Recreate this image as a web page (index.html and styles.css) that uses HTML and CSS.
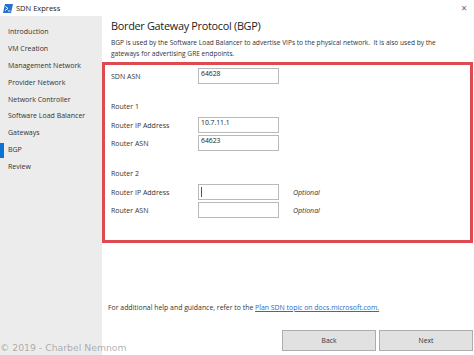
FILE: index.html
```html
<!DOCTYPE html>
<html>
<head>
<meta charset="utf-8">
<link rel="stylesheet" href="styles.css">
</head>
<body>
<div class="window">
  <div class="titlebar">
    <svg class="appicon" width="10" height="9" viewBox="0 0 10 9">
      <polygon points="2,0 10,0 8,9 0,9" fill="#2a6fc9"/>
      <polyline points="2.5,2.5 5,4.5 2,6.5" fill="none" stroke="#fff" stroke-width="1"/>
      <line x1="5" y1="7" x2="7.5" y2="7" stroke="#fff" stroke-width="0.9"/>
    </svg>
    <span class="apptitle">SDN Express</span>
    <span class="close">×</span>
  </div>
  <div class="main">
    <nav class="sidebar">
      <div class="navitem">Introduction</div>
      <div class="navitem">VM Creation</div>
      <div class="navitem">Management Network</div>
      <div class="navitem">Provider Network</div>
      <div class="navitem">Network Controller</div>
      <div class="navitem">Software Load Balancer</div>
      <div class="navitem">Gateways</div>
      <div class="navitem active">BGP</div>
      <div class="navitem">Review</div>
    </nav>
    <section class="content">
      <h1 class="title">Border Gateway Protocol (BGP)</h1>
      <p class="desc">BGP is used by the Software Load Balancer to advertise VIPs to the physical network.&nbsp; It is also used by the gateways for advertising GRE endpoints.</p>
      <div class="form">
        <div class="row first">
          <span class="label">SDN ASN</span>
          <div class="input">64628</div>
        </div>
        <div class="group">Router 1</div>
        <div class="row">
          <span class="label">Router IP Address</span>
          <div class="input">10.7.11.1</div>
        </div>
        <div class="row tight">
          <span class="label">Router ASN</span>
          <div class="input">64623</div>
        </div>
        <div class="group">Router 2</div>
        <div class="row">
          <span class="label">Router IP Address</span>
          <div class="input"><span class="caret"></span></div>
          <span class="opt">Optional</span>
        </div>
        <div class="row tight">
          <span class="label">Router ASN</span>
          <div class="input"></div>
          <span class="opt">Optional</span>
        </div>
      </div>
      <p class="help">For additional help and guidance, refer to the <a class="link">Plan SDN topic on docs.microsoft.com.</a></p>
      <div class="buttons">
        <div class="btn back">Back</div>
        <div class="btn next">Next</div>
      </div>
    </section>
  </div>
  <div class="watermark">© 2019 - Charbel Nemnom</div>
</div>
</body>
</html>
```
FILE: styles.css
```css
* { box-sizing: border-box; }
html, body { margin: 0; padding: 0; }
body {
  width: 474px;
  height: 355px;
  overflow: hidden;
  background: #fff;
  font-family: "Open Sans", "Noto Sans", sans-serif;
  color: #333;
}
.window {
  position: relative;
  width: 474px;
  height: 355px;
  display: flex;
  flex-direction: column;
}
.titlebar {
  height: 16px;
  display: flex;
  align-items: center;
  padding-left: 3px;
  font-size: 7.5px;
  color: #222;
}
.appicon { margin-right: 3px; }
.apptitle { flex: 1; }
.close {
  width: 18px;
  font-size: 10px;
  color: #666;
  text-align: center;
  margin-right: 1px;
}
.main {
  flex: 1;
  display: flex;
}
.sidebar {
  width: 102px;
  background: #ececec;
  padding-top: 8px;
}
.navitem {
  position: relative;
  height: 16.9px;
  line-height: 16.9px;
  padding-left: 8px;
  font-size: 7px;
  color: #333;
  white-space: nowrap;
}
.navitem.active::before {
  content: "";
  position: absolute;
  left: 0;
  top: 1px;
  width: 4px;
  height: 15px;
  background: #0a74d6;
}
.content {
  flex: 1;
  display: flex;
  flex-direction: column;
  padding-top: 2px;
}
.title {
  margin: 0 0 3px 9px;
  font-size: 10.9px;
  letter-spacing: -0.3px;
  line-height: 16px;
  font-weight: normal;
  color: #222;
}
.desc {
  margin: 0 0 0 9px;
  font-size: 6.6px;
  line-height: 11px;
  color: #333;
  width: 350px;
}
.form {
  margin-top: 3px;
  width: 371px;
  height: 181px;
  border: 3px solid #dd4b50;
  padding: 3px 0 0 6px;
}
.row {
  display: flex;
  align-items: center;
  height: 16px;
  margin-top: 4px;
}
.row.first { margin-top: 0; }
.row.tight { margin-top: 2px; }
.label {
  width: 87px;
  font-size: 7px;
  color: #333;
}
.input {
  width: 81px;
  height: 16px;
  border: 1px solid #b9b9b9;
  background: #fff;
  font-size: 6.8px;
  line-height: 9px;
  padding-left: 2px;
  color: #222;
  position: relative;
  align-self: flex-start;
}
.caret {
  position: absolute;
  left: 2px;
  top: 2px;
  width: 1px;
  height: 10px;
  background: #555;
}
.opt {
  margin-left: 14px;
  font-size: 7px;
  font-style: italic;
  color: #333;
}
.group {
  font-size: 7px;
  line-height: 12px;
  height: 12px;
  margin-top: 17px;
  color: #333;
}
.help {
  margin: 60px 0 0 6px;
  font-size: 6.9px;
  line-height: 10px;
  color: #333;
}
.link {
  color: #2b6cc4;
  text-decoration: underline;
}
.buttons {
  display: flex;
  justify-content: flex-end;
  gap: 3px;
  margin-top: 17px;
  padding-right: 1px;
}
.btn {
  width: 94px;
  height: 21px;
  background: #e1e1e1;
  border: 1px solid #adadad;
  font-size: 6.8px;
  line-height: 19px;
  text-align: center;
  color: #333;
}
.watermark {
  position: absolute;
  left: 0;
  bottom: 0;
  font-family: "DejaVu Sans", sans-serif;
  font-size: 9.3px;
  line-height: 14px;
  color: rgba(150,150,150,0.75);
}
```
